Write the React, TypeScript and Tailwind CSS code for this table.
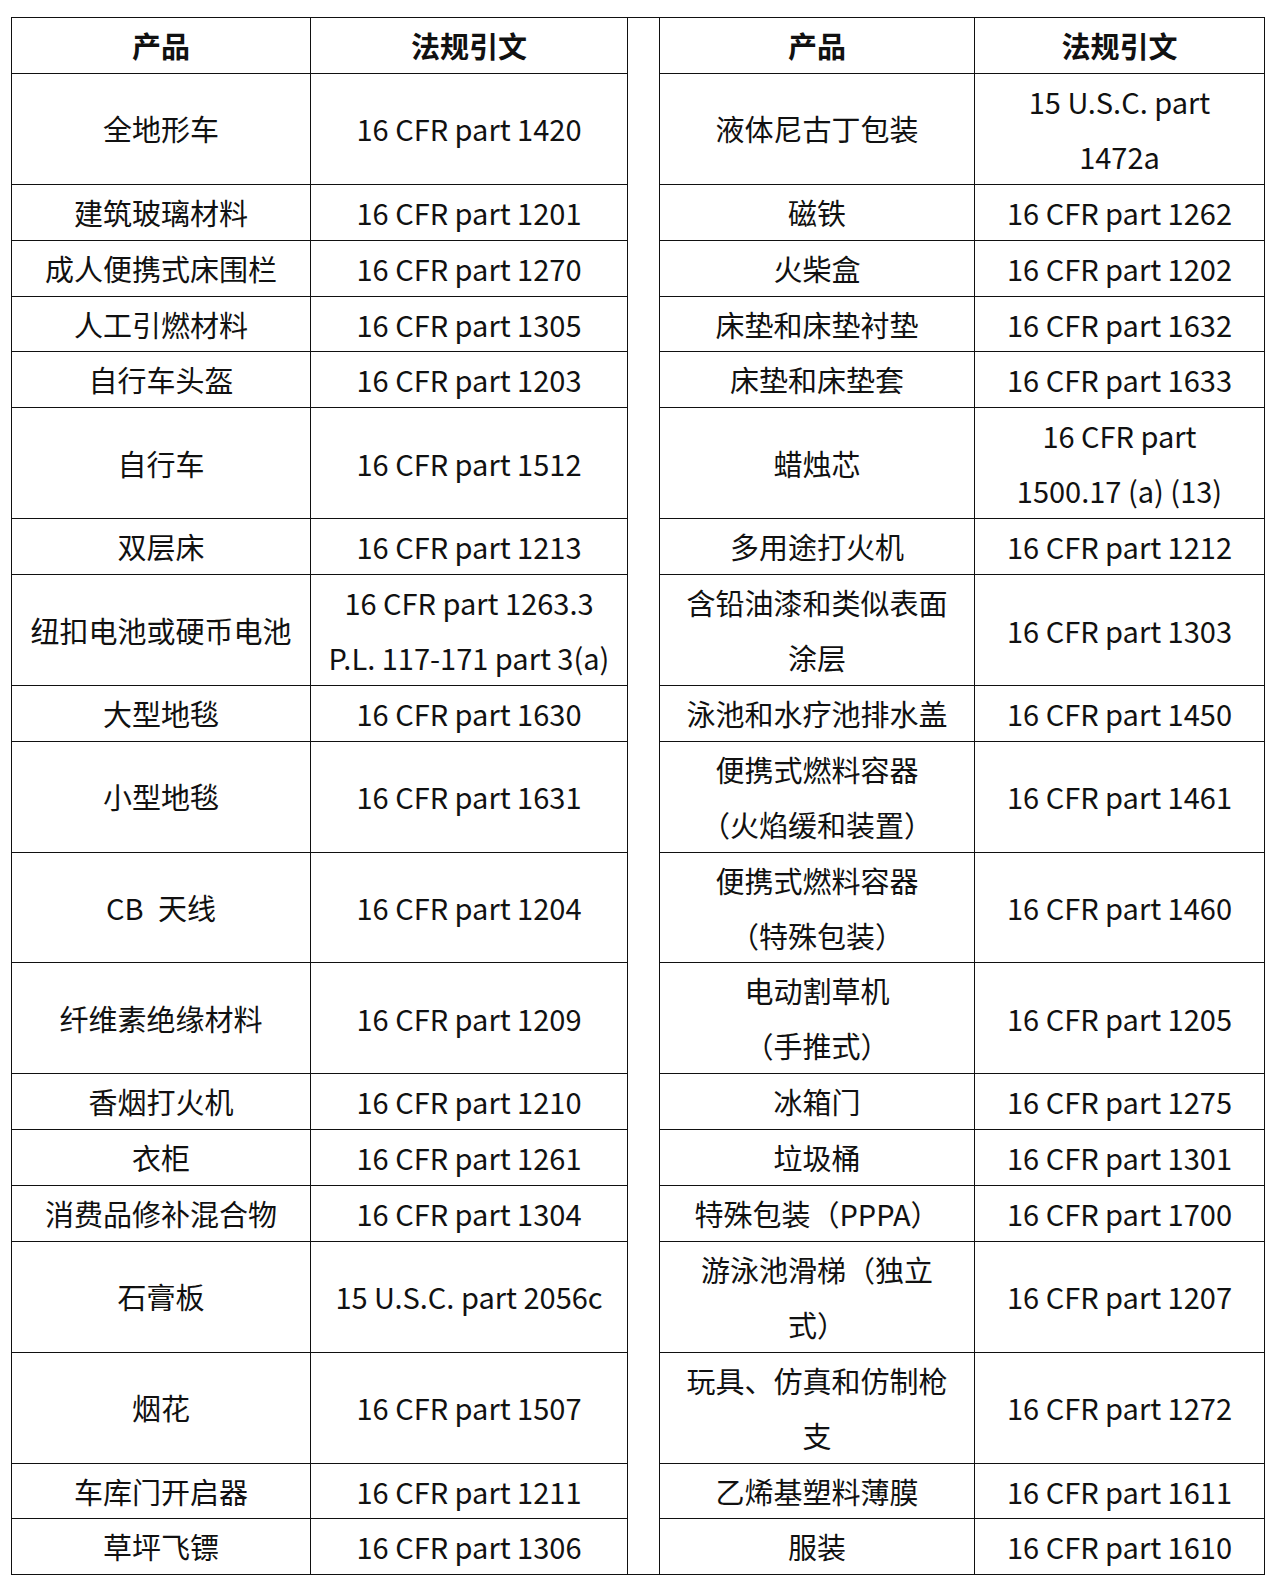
import React from "react";

type Row = [string, string, string, string];

const rows: Row[] = [
  ["全地形车", "16 CFR part 1420", "液体尼古丁包装", "15 U.S.C. part\n1472a"],
  ["建筑玻璃材料", "16 CFR part 1201", "磁铁", "16 CFR part 1262"],
  ["成人便携式床围栏", "16 CFR part 1270", "火柴盒", "16 CFR part 1202"],
  ["人工引燃材料", "16 CFR part 1305", "床垫和床垫衬垫", "16 CFR part 1632"],
  ["自行车头盔", "16 CFR part 1203", "床垫和床垫套", "16 CFR part 1633"],
  ["自行车", "16 CFR part 1512", "蜡烛芯", "16 CFR part\n1500.17 (a) (13)"],
  ["双层床", "16 CFR part 1213", "多用途打火机", "16 CFR part 1212"],
  ["纽扣电池或硬币电池", "16 CFR part 1263.3\nP.L. 117-171 part 3(a)", "含铅油漆和类似表面\n涂层", "16 CFR part 1303"],
  ["大型地毯", "16 CFR part 1630", "泳池和水疗池排水盖", "16 CFR part 1450"],
  ["小型地毯", "16 CFR part 1631", "便携式燃料容器\n（火焰缓和装置）", "16 CFR part 1461"],
  ["CB\u2002天线", "16 CFR part 1204", "便携式燃料容器\n（特殊包装）", "16 CFR part 1460"],
  ["纤维素绝缘材料", "16 CFR part 1209", "电动割草机\n（手推式）", "16 CFR part 1205"],
  ["香烟打火机", "16 CFR part 1210", "冰箱门", "16 CFR part 1275"],
  ["衣柜", "16 CFR part 1261", "垃圾桶", "16 CFR part 1301"],
  ["消费品修补混合物", "16 CFR part 1304", "特殊包装（PPPA）", "16 CFR part 1700"],
  ["石膏板", "15 U.S.C. part 2056c", "游泳池滑梯（独立\n式）", "16 CFR part 1207"],
  ["烟花", "16 CFR part 1507", "玩具、仿真和仿制枪\n支", "16 CFR part 1272"],
  ["车库门开启器", "16 CFR part 1211", "乙烯基塑料薄膜", "16 CFR part 1611"],
  ["草坪飞镖", "16 CFR part 1306", "服装", "16 CFR part 1610"],
];

const cell =
  "flex items-center justify-center text-center whitespace-pre-line px-1 border-[#111]";

function RowCells({ r, last, header }: { r: string[]; last: boolean; header?: boolean }) {
  const b = last ? "" : "border-b";
  const w = header ? "font-bold" : "";
  return (
    <>
      <div className={`${cell} ${b} ${w} border-r`}>{r[0]}</div>
      <div className={`${cell} ${b} ${w} border-r`}>{r[1]}</div>
      <div className="border-r border-[#111]" />
      <div className={`${cell} ${b} ${w} border-r`}>{r[2]}</div>
      <div className={`${cell} ${b} ${w}`}>{r[3]}</div>
    </>
  );
}

export default function App() {
  return (
    <div
      className="bg-white w-[1280px] min-h-[1595px] pt-[17px] pl-[11px] text-[#111]"
      style={{ fontFamily: '"Noto Sans CJK SC", "Noto Sans", sans-serif' }}
    >
      <div className="grid w-fit grid-cols-[299px_317px_32px_315px_289px] border border-[#111] text-[29px] leading-[54.9px]">
        <RowCells r={["产品", "法规引文", "产品", "法规引文"]} last={false} header />
        {rows.map((r, ri) => (
          <RowCells key={ri} r={r} last={ri === rows.length - 1} />
        ))}
      </div>
    </div>
  );
}
